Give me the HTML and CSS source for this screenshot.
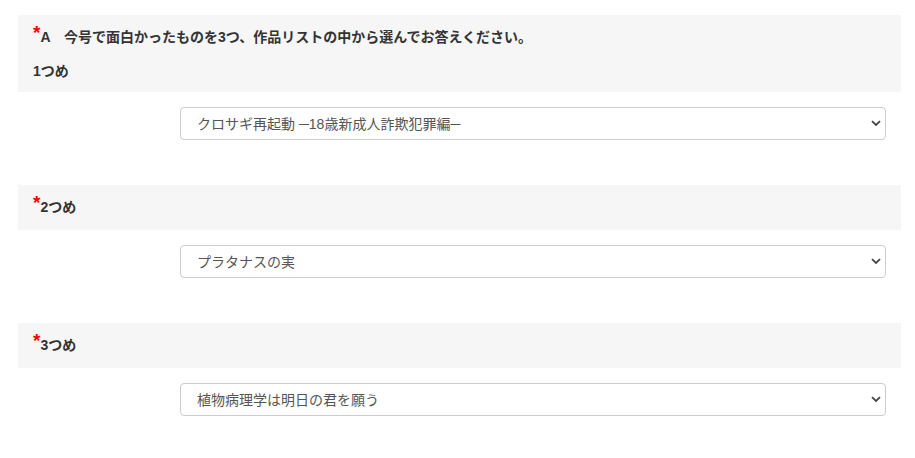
FILE: index.html
```html
<!DOCTYPE html>
<html lang="ja">
<head>
<meta charset="utf-8">
<link rel="stylesheet" href="styles.css">
</head>
<body>
<div class="form">
  <div class="q">
    <div class="q-head q-head-multi">
      <div class="q-title"><span class="req">*</span>A　今号で面白かったものを3つ、作品リストの中から選んでお答えください。</div>
      <div class="q-sub">1つめ</div>
    </div>
    <div class="q-body">
      <div class="sel-wrap">
        <select class="sel"><option>クロサギ再起動 ─18歳新成人詐欺犯罪編─</option></select>
        <svg class="chev" width="10" height="7" viewBox="0 0 10 7"><path d="M1 1.2 L5 5 L9 1.2" fill="none" stroke="#444" stroke-width="1.8"/></svg>
      </div>
    </div>
  </div>
  <div class="q">
    <div class="q-head">
      <div class="q-title"><span class="req">*</span>2つめ</div>
    </div>
    <div class="q-body">
      <div class="sel-wrap">
        <select class="sel"><option>プラタナスの実</option></select>
        <svg class="chev" width="10" height="7" viewBox="0 0 10 7"><path d="M1 1.2 L5 5 L9 1.2" fill="none" stroke="#444" stroke-width="1.8"/></svg>
      </div>
    </div>
  </div>
  <div class="q">
    <div class="q-head">
      <div class="q-title"><span class="req">*</span>3つめ</div>
    </div>
    <div class="q-body">
      <div class="sel-wrap">
        <select class="sel"><option>植物病理学は明日の君を願う</option></select>
        <svg class="chev" width="10" height="7" viewBox="0 0 10 7"><path d="M1 1.2 L5 5 L9 1.2" fill="none" stroke="#444" stroke-width="1.8"/></svg>
      </div>
    </div>
  </div>
</div>
</body>
</html>
```
FILE: styles.css
```css
html, body {
  margin: 0;
  padding: 0;
  background: #fff;
}
body {
  font-family: "Liberation Sans", "Noto Sans CJK JP", sans-serif;
  color: #333;
}
.form {
  padding: 15px 14px 0 18px;
}
.q {
  margin-bottom: 45px;
}
.q-head {
  background: #f6f6f6;
  padding: 12px 15px 12px;
}
.q-head-multi {
  padding-bottom: 10px;
}
.q-title, .q-sub {
  font-size: 14px;
  font-weight: bold;
  line-height: 21px;
}
.q-sub {
  margin-top: 13px;
}
.req {
  color: #f00;
  font-size: 19px;
  line-height: 0;
  vertical-align: 3px;
  font-weight: bold;
}
.q-body {
  padding: 15px 0 0 162px;
}
.sel-wrap {
  position: relative;
  width: 706px;
}
.sel {
  display: block;
  width: 100%;
  height: 33px;
  box-sizing: border-box;
  border: 1px solid #ccc;
  border-radius: 4px;
  background: #fff;
  color: #555;
  font-family: "Liberation Sans", "Noto Sans CJK JP", sans-serif;
  font-size: 14px;
  padding: 0 30px 0 16px;
  -webkit-appearance: none;
  appearance: none;
  outline: none;
}
.chev {
  position: absolute;
  right: 5px;
  top: 13px;
}
```
